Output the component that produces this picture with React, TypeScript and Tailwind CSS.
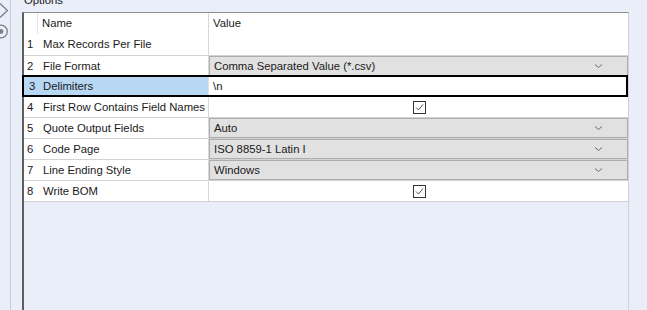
import React from 'react';

type Row = {
  n: number;
  name: string;
  kind: 'text' | 'select' | 'check' | 'empty';
  value?: string;
  selected?: boolean;
};

const ROWS: Row[] = [
  { n: 1, name: 'Max Records Per File', kind: 'empty' },
  { n: 2, name: 'File Format', kind: 'select', value: 'Comma Separated Value (*.csv)' },
  { n: 3, name: 'Delimiters', kind: 'text', value: '\\n', selected: true },
  { n: 4, name: 'First Row Contains Field Names', kind: 'check' },
  { n: 5, name: 'Quote Output Fields', kind: 'select', value: 'Auto' },
  { n: 6, name: 'Code Page', kind: 'select', value: 'ISO 8859-1 Latin I' },
  { n: 7, name: 'Line Ending Style', kind: 'select', value: 'Windows' },
  { n: 8, name: 'Write BOM', kind: 'check' },
];

function Chevron() {
  return (
    <svg width="9" height="6" viewBox="0 0 9 6" className="shrink-0">
      <path d="M1 1.5 L4.5 4.5 L8 1.5" fill="none" stroke="#6a6a6a" strokeWidth="1" />
    </svg>
  );
}

function CheckBox() {
  return (
    <div className="w-[13px] h-[13px] border border-[#333] bg-white flex items-center justify-center">
      <svg width="11" height="11" viewBox="0 0 11 11">
        <path d="M2 5.5 L4.5 8 L9 2.5" fill="none" stroke="#555" strokeWidth="1" />
      </svg>
    </div>
  );
}

function ValueCell({ row }: { row: Row }) {
  if (row.kind === 'select') {
    return (
      <div className="h-full flex items-center justify-between bg-[#e1e1e1] border border-[#adadad] pl-[4px] pr-[24px]">
        <span className="whitespace-nowrap">{row.value}</span>
        <Chevron />
      </div>
    );
  }
  if (row.kind === 'check') {
    return (
      <div className="h-full flex items-center justify-center pl-[1px]">
        <CheckBox />
      </div>
    );
  }
  if (row.kind === 'text') {
    return <div className="h-full flex items-center pl-[4px]">{row.value}</div>;
  }
  return <div className="h-full" />;
}

export default function App() {
  return (
    <div
      className="w-[647px] h-[310px] bg-[#eaeef8] flex overflow-hidden text-[11.3px] text-[#1a1a1a]"
      style={{ fontFamily: "'Liberation Sans', Arial, sans-serif" }}
    >
      <div className="w-[11px] shrink-0 border-r border-[#c9ccd4] flex flex-col items-start pt-[3px] gap-[6px]">
        <svg width="9" height="15" viewBox="0 0 9 15">
          <path d="M0 0.5 L7.5 7.5 L0 14.5" fill="none" stroke="#7d8087" strokeWidth="1.3" />
        </svg>
        <svg width="9" height="15" viewBox="0 0 9 15">
          <circle cx="1" cy="7.5" r="6.3" fill="none" stroke="#7d8087" strokeWidth="1.3" />
          <circle cx="1" cy="7.5" r="2.4" fill="#7d8087" />
        </svg>
      </div>

      <div className="flex-1 flex flex-col pl-[11px] pr-[18px]">
        <div className="h-[12px] shrink-0">
          <div className="leading-[12px] pl-[2px] relative -top-[6px]">Options</div>
        </div>
        <div className="flex-1 border-l-2 border-[#5e5e5e] border-t border-t-[#8e8e8e] border-r border-r-[#cfd2d8] flex flex-col">
          <div className="bg-white">
            <div className="grid grid-cols-[14px_171px_1fr] h-[21px] items-center">
              <div className="h-full border-r border-[#e3e3e3]" />
              <div className="pl-[4px] border-r border-[#d8d8d8] h-full flex items-center">Name</div>
              <div className="pl-[4px]">Value</div>
            </div>
            {ROWS.map(row => (
              <div
                key={row.n}
                className={`grid grid-cols-[14px_171px_1fr] h-[21px] whitespace-nowrap ${
                  row.selected
                    ? 'border-2 border-black -ml-[2px] h-[22px] -my-[1px] relative'
                    : row.n === 1
                    ? ''
                    : 'border-t border-[#d2d2d2]'
                }`}
              >
                <div className={`flex items-center pl-[3px] ${row.selected ? 'bg-[#b7d7f2] pl-[5px]' : ''}`}>{row.n}</div>
                <div
                  className={`flex items-center pl-[5px] border-r border-[#d8d8d8] ${
                    row.selected ? 'bg-[#b7d7f2] border-r-[#e0e0e0]' : ''
                  }`}
                >
                  {row.name}
                </div>
                <div className="min-w-0">
                  <ValueCell row={row} />
                </div>
              </div>
            ))}
            <div className="border-t border-[#d2d2d2]" />
          </div>
        </div>
      </div>
    </div>
  );
}
